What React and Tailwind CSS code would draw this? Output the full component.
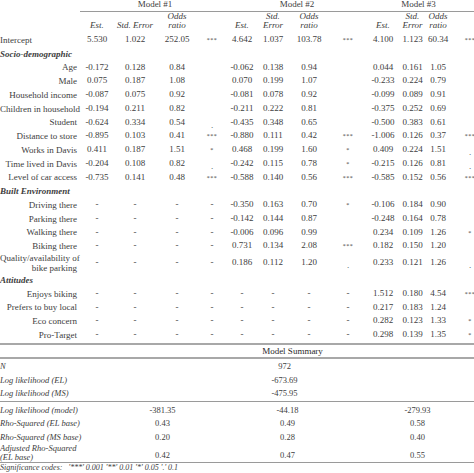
import React from 'react';

// Table of logit model results: three models, each with est / std error / odds ratio / significance.
const COLS = [80, 34, 42, 42, 28, 32, 30, 42, 36, 34, 25, 26, 38];

const DASH = ['-', '-', '-', '-'];

const sections = [
  {
    rows: [
      ['Intercept', ['5.530', '1.022', '252.05', '***'], ['4.642', '1.037', '103.78', '***'], ['4.100', '1.123', '60.34', '***'], 'left'],
    ],
  },
  {
    title: 'Socio-demographic',
    rows: [
      ['Age', ['-0.172', '0.128', '0.84', ''], ['-0.062', '0.138', '0.94', ''], ['0.044', '0.161', '1.05', '']],
      ['Male', ['0.075', '0.187', '1.08', ''], ['0.070', '0.199', '1.07', ''], ['-0.233', '0.224', '0.79', '']],
      ['Household income', ['-0.087', '0.075', '0.92', ''], ['-0.081', '0.078', '0.92', ''], ['-0.099', '0.089', '0.91', '']],
      ['Children in household', ['-0.194', '0.211', '0.82', ''], ['-0.211', '0.222', '0.81', ''], ['-0.375', '0.252', '0.69', '']],
      ['Student', ['-0.624', '0.334', '0.54', '.'], ['-0.435', '0.348', '0.65', ''], ['-0.500', '0.383', '0.61', '']],
      ['Distance to store', ['-0.895', '0.103', '0.41', '***'], ['-0.880', '0.111', '0.42', '***'], ['-1.006', '0.126', '0.37', '***']],
      ['Works in Davis', ['0.411', '0.187', '1.51', '*'], ['0.468', '0.199', '1.60', '*'], ['0.409', '0.224', '1.51', '.']],
      ['Time lived in Davis', ['-0.204', '0.108', '0.82', '.'], ['-0.242', '0.115', '0.78', '*'], ['-0.215', '0.126', '0.81', '.']],
      ['Level of car access', ['-0.735', '0.141', '0.48', '***'], ['-0.588', '0.140', '0.56', '***'], ['-0.585', '0.152', '0.56', '***']],
    ],
  },
  {
    title: 'Built Environment',
    rows: [
      ['Driving there', DASH, ['-0.350', '0.163', '0.70', '*'], ['-0.106', '0.184', '0.90', '']],
      ['Parking there', DASH, ['-0.142', '0.144', '0.87', ''], ['-0.248', '0.164', '0.78', '']],
      ['Walking there', DASH, ['-0.006', '0.096', '0.99', ''], ['0.234', '0.109', '1.26', '*']],
      ['Biking there', DASH, ['0.731', '0.134', '2.08', '***'], ['0.182', '0.150', '1.20', '']],
      [['Quality/availability of', 'bike parking'], DASH, ['0.186', '0.112', '1.20', '.'], ['0.233', '0.121', '1.26', '.']],
    ],
  },
  {
    title: 'Attitudes',
    rows: [
      ['Enjoys biking', DASH, DASH, ['1.512', '0.180', '4.54', '***']],
      ['Prefers to buy local', DASH, DASH, ['0.217', '0.183', '1.24', '']],
      ['Eco concern', DASH, DASH, ['0.282', '0.123', '1.33', '*']],
      ['Pro-Target', DASH, DASH, ['0.298', '0.139', '1.35', '*']],
    ],
  },
];

function Sig({ v }) {
  if (v === '.') return <span className="relative top-[3px]">.</span>;
  if (v.startsWith('*')) return <span className="text-[6px] tracking-[0.5px]">{v}</span>;
  return v;
}

function BodyRow({ row }) {
  const [label, m1, m2, m3, align] = row;
  const multi = Array.isArray(label);
  const cells = [...m1, ...m2, ...m3];
  return (
    <tr className={multi ? 'h-[20px]' : 'h-[13.75px]'}>
      <td className={`${align === 'left' ? 'text-left' : 'text-right'} pr-[3px] leading-[10px] whitespace-nowrap`}>
        {multi ? label.map(l => <div key={l}>{l}</div>) : label}
      </td>
      {cells.map((c, i) => (
        <td key={i} className="text-center">
          {i % 4 === 3 ? <Sig v={c} /> : c}
        </td>
      ))}
    </tr>
  );
}

const summaryTop = [
  ['N', '972'],
  ['Log likelihood (EL)', '-673.69'],
  ['Log likelihood (MS)', '-475.95'],
];

const summaryBottom = [
  [['Log likelihood (model)'], '-381.35', '-44.18', '-279.93'],
  [['Rho-Squared (EL base)'], '0.43', '0.49', '0.58'],
  [['Rho-Squared (MS base)'], '0.20', '0.28', '0.40'],
  [['Adjusted Rho-Squared', '(EL base)'], '0.42', '0.47', '0.55'],
];

export default function App() {
  return (
    <div className="w-[474px] h-[473px] overflow-hidden bg-white text-[#404040] text-[9px] font-['Liberation_Serif',serif]">
      <table className="table-fixed border-collapse w-[489px]">
        <colgroup>
          {COLS.map((w, i) => <col key={i} style={{ width: w }} />)}
        </colgroup>
        <thead>
          <tr className="h-[11px] leading-[9px]">
            <th />
            <th colSpan={4} className="font-normal text-center align-top border-b border-[#9a9a9a] pl-[4px]">Model #1</th>
            <th colSpan={4} className="font-normal text-center align-top border-b border-[#9a9a9a] pl-[2px]">Model #2</th>
            <th colSpan={4} className="font-normal text-center align-top border-b border-[#9a9a9a] pr-[18px]">Model #3</th>
          </tr>
          <tr className="h-[22px] italic leading-[8.5px]">
            <th />
            <th className="font-normal align-bottom pb-[4px]">Est.</th>
            <th className="font-normal align-bottom pb-[4px] whitespace-nowrap">Std. Error</th>
            <th className="font-normal align-bottom pb-[4px]">Odds<br />ratio</th>
            <th />
            <th className="font-normal align-bottom pb-[4px]">Est.</th>
            <th className="font-normal align-bottom pb-[4px]">Std.<br />Error</th>
            <th className="font-normal align-bottom pb-[4px]">Odds<br />ratio</th>
            <th />
            <th className="font-normal align-bottom pb-[4px]">Est.</th>
            <th className="font-normal align-bottom pb-[4px]">Std.<br />Error</th>
            <th className="font-normal align-bottom pb-[4px]">Odds<br />ratio</th>
            <th />
          </tr>
        </thead>
        <tbody>
          {sections.map((s, si) => (
            <React.Fragment key={si}>
              {s.title && (
                <tr className="h-[13.75px]">
                  <td colSpan={13} className="font-bold italic text-left leading-[10px]">{s.title}</td>
                </tr>
              )}
              {s.rows.map((r, ri) => <BodyRow key={ri} row={r} />)}
            </React.Fragment>
          ))}
        </tbody>
      </table>

      <div className="border-t-2 border-[#a8a8a8] mt-[1px]" />
      <div className="grid grid-cols-[100px_125px_125px_135px] h-[11px] items-center">
        <div />
        <div className="col-span-3 text-center text-[#2a2a2a]">Model Summary</div>
      </div>
      <div className="border-t-2 border-[#a8a8a8] mt-[1px]" />

      <div className="pt-[1px] text-[8.5px]">
        {summaryTop.map(([l, v]) => (
          <div key={l} className="grid grid-cols-[100px_125px_125px_135px] h-[13.5px] items-center">
            <div className="italic whitespace-nowrap">{l}</div>
            <div />
            <div className="text-center pr-[6px]">{v}</div>
            <div />
          </div>
        ))}
      </div>
      <div className="border-t border-[#9a9a9a] mt-[1px]" />
      <div className="pt-[1px] text-[8.5px]">
        {summaryBottom.map(([l, a, b, c]) => (
          <div key={l[0]} className={`grid grid-cols-[100px_125px_125px_135px] items-center ${l.length > 1 ? 'h-[18px]' : 'h-[13.5px]'}`}>
            <div className="italic whitespace-nowrap leading-[9px]">
              {l.map(x => <div key={x}>{x}</div>)}
            </div>
            <div className={`text-center ${l.length > 1 ? 'self-end' : ''}`}>{a}</div>
            <div className={`text-center ${l.length > 1 ? 'self-end' : ''}`}>{b}</div>
            <div className={`text-center ${l.length > 1 ? 'self-end' : ''}`}>{c}</div>
          </div>
        ))}
      </div>
      <div className="border-t border-[#9a9a9a]" />
      <div className="italic text-[8px] leading-[10px] whitespace-nowrap">
        Significance codes:&nbsp;&nbsp;&nbsp;'***' 0.001 '**' 0.01 '*' 0.05 '.' 0.1
      </div>
    </div>
  );
}
